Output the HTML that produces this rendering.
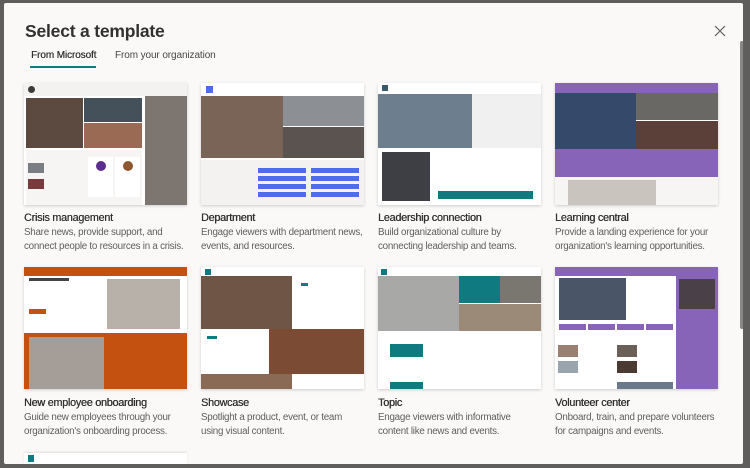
<!DOCTYPE html>
<html><head><meta charset="utf-8"><style>
*{margin:0;padding:0;box-sizing:border-box}
body{width:750px;height:468px;overflow:hidden;background:#5f5e5d;font-family:"Liberation Sans",sans-serif;position:relative}
.dlg{position:absolute;left:4px;top:3px;width:739px;height:461px;background:#faf9f8;border-radius:2px;overflow:hidden}
.h{position:absolute;left:21px;top:18px;font-size:17.5px;color:#323130;letter-spacing:-0.2px;font-weight:600}
.tab{position:absolute;top:47px;font-size:10px;color:#323130;letter-spacing:-0.1px}
.ul{position:absolute;left:26px;top:63px;width:66px;height:2px;background:#0f7b80}
.x{position:absolute;left:709px;top:21px;width:14px;height:14px}
.sb{position:absolute;left:736px;top:38px;width:4px;height:288px;background:#8a8886;border-radius:2px}
.t{position:absolute;width:163px;height:122px;background:#fff;box-shadow:0 1px 3px rgba(0,0,0,.18);overflow:hidden}
.t div{position:absolute}
.ti{position:absolute;font-size:10.8px;color:#323130;white-space:nowrap;letter-spacing:-0.25px;text-shadow:0.3px 0 0 #323130}
.de{position:absolute;font-size:9.8px;color:#605e5c;line-height:14px;white-space:nowrap;letter-spacing:-0.25px}
</style></head><body>
<div class="dlg">
<div class="h">Select a template</div>
<div class="tab" style="left:27px;text-shadow:0.3px 0 0 #323130">From Microsoft</div>
<div class="tab" style="left:111px;color:#484644">From your organization</div>
<div class="ul"></div>
<svg class="x" viewBox="0 0 14 14"><path d="M2 2L12 12M12 2L2 12" stroke="#605e5c" stroke-width="1.2"/></svg>
<div class="sb"></div>
</div>

<!-- Row 1 -->
<div class="t" style="left:24px;top:83px">
<div style="left:0;top:0;width:163px;height:13px;background:#f3f2f1"></div>
<div style="left:4px;top:3px;width:7px;height:7px;border-radius:50%;background:#3b3a39"></div>
<div style="left:2px;top:15px;width:57px;height:50px;background:#5c4a40"></div>
<div style="left:60px;top:15px;width:58px;height:24px;background:#44505a"></div>
<div style="left:60px;top:40px;width:58px;height:25px;background:#9a6a55"></div>
<div style="left:121px;top:13px;width:42px;height:109px;background:#7d7670"></div>
<div style="left:2px;top:67px;width:116px;height:55px;background:#f6f5f4"></div>
<div style="left:64px;top:74px;width:25px;height:40px;background:#fff"></div>
<div style="left:91px;top:74px;width:25px;height:40px;background:#fff"></div>
<div style="left:72px;top:78px;width:10px;height:10px;border-radius:50%;background:#5c2d91"></div>
<div style="left:99px;top:78px;width:10px;height:10px;border-radius:50%;background:#8e562e"></div>
<div style="left:4px;top:80px;width:16px;height:10px;background:#7a7d82"></div>
<div style="left:4px;top:96px;width:16px;height:10px;background:#7a3a3d"></div>
</div>
<div class="ti" style="left:24px;top:212px">Crisis management</div>
<div class="de" style="left:24px;top:226px">Share news, provide support, and<br>connect people to resources in a crisis.</div>

<div class="t" style="left:201px;top:83px">
<div style="left:5px;top:3px;width:7px;height:7px;background:#4f6bed"></div>
<div style="left:0;top:13px;width:82px;height:62px;background:#7a6458"></div>
<div style="left:82px;top:13px;width:81px;height:30px;background:#8c8f94"></div>
<div style="left:82px;top:44px;width:81px;height:31px;background:#5a5350"></div>
<div style="left:0;top:77px;width:163px;height:45px;background:#f3f2f1"></div>
<div style="left:57px;top:85px;width:48px;height:5px;background:#4f6bed"></div>
<div style="left:57px;top:93px;width:48px;height:5px;background:#4f6bed"></div>
<div style="left:57px;top:101px;width:48px;height:5px;background:#4f6bed"></div>
<div style="left:57px;top:109px;width:48px;height:5px;background:#4f6bed"></div>
<div style="left:110px;top:85px;width:48px;height:5px;background:#4f6bed"></div>
<div style="left:110px;top:93px;width:48px;height:5px;background:#4f6bed"></div>
<div style="left:110px;top:101px;width:48px;height:5px;background:#4f6bed"></div>
<div style="left:110px;top:109px;width:48px;height:5px;background:#4f6bed"></div>
</div>
<div class="ti" style="left:201px;top:212px">Department</div>
<div class="de" style="left:201px;top:226px">Engage viewers with department news,<br>events, and resources.</div>

<div class="t" style="left:378px;top:83px">
<div style="left:4px;top:2px;width:6px;height:6px;background:#3d5a6c"></div>
<div style="left:0;top:11px;width:94px;height:54px;background:#6d7f8e"></div>
<div style="left:94px;top:11px;width:69px;height:54px;background:#f0f0f0"></div>
<div style="left:4px;top:69px;width:48px;height:49px;background:#3e3f44"></div>
<div style="left:60px;top:108px;width:95px;height:8px;background:#0f7b80"></div>
</div>
<div class="ti" style="left:378px;top:212px">Leadership connection</div>
<div class="de" style="left:378px;top:226px">Build organizational culture by<br>connecting leadership and teams.</div>

<div class="t" style="left:555px;top:83px">
<div style="left:0;top:0;width:163px;height:10px;background:#8764b8"></div>
<div style="left:0;top:10px;width:81px;height:56px;background:#354a6a"></div>
<div style="left:81px;top:10px;width:82px;height:27px;background:#6a6864"></div>
<div style="left:81px;top:38px;width:82px;height:28px;background:#5a4038"></div>
<div style="left:0;top:66px;width:163px;height:28px;background:#8764b8"></div>
<div style="left:0;top:94px;width:163px;height:28px;background:#f6f5f4"></div>
<div style="left:13px;top:97px;width:88px;height:25px;background:#c9c4bd"></div>
</div>
<div class="ti" style="left:555px;top:212px">Learning central</div>
<div class="de" style="left:555px;top:226px">Provide a landing experience for your<br>organization's learning opportunities.</div>

<!-- Row 2 -->
<div class="t" style="left:24px;top:267px">
<div style="left:0;top:0;width:163px;height:9px;background:#c4510f"></div>
<div style="left:5px;top:11px;width:40px;height:3px;background:#444"></div>
<div style="left:5px;top:42px;width:17px;height:5px;background:#c4510f"></div>
<div style="left:83px;top:12px;width:73px;height:50px;background:#b8b1aa"></div>
<div style="left:0;top:66px;width:163px;height:56px;background:#c4510f"></div>
<div style="left:5px;top:70px;width:75px;height:52px;background:#a59e98"></div>
</div>
<div class="ti" style="left:24px;top:397px">New employee onboarding</div>
<div class="de" style="left:24px;top:411px">Guide new employees through your<br>organization's onboarding process.</div>

<div class="t" style="left:201px;top:267px">
<div style="left:4px;top:2px;width:6px;height:6px;background:#0f7b80"></div>
<div style="left:0;top:9px;width:91px;height:53px;background:#6e5546"></div>
<div style="left:68px;top:62px;width:95px;height:45px;background:#7b4b34"></div>
<div style="left:0;top:107px;width:91px;height:15px;background:#8a6a54"></div>
<div style="left:0;top:62px;width:68px;height:45px;background:#fff"></div>
<div style="left:6px;top:69px;width:10px;height:3px;background:#0f7b80"></div>
<div style="left:100px;top:16px;width:7px;height:3px;background:#0f7b80"></div>
</div>
<div class="ti" style="left:201px;top:397px">Showcase</div>
<div class="de" style="left:201px;top:411px">Spotlight a product, event, or team<br>using visual content.</div>

<div class="t" style="left:378px;top:267px">
<div style="left:3px;top:2px;width:6px;height:6px;background:#0f7b80"></div>
<div style="left:0;top:9px;width:81px;height:55px;background:#a8a8a6"></div>
<div style="left:81px;top:9px;width:41px;height:27px;background:#0f7b80"></div>
<div style="left:122px;top:9px;width:41px;height:27px;background:#7a7670"></div>
<div style="left:81px;top:37px;width:82px;height:27px;background:#9c8a78"></div>
<div style="left:12px;top:77px;width:33px;height:13px;background:#0f7b80"></div>
<div style="left:12px;top:115px;width:33px;height:7px;background:#0f7b80"></div>
</div>
<div class="ti" style="left:378px;top:397px">Topic</div>
<div class="de" style="left:378px;top:411px">Engage viewers with informative<br>content like news and events.</div>

<div class="t" style="left:555px;top:267px">
<div style="left:0;top:0;width:163px;height:9px;background:#8764b8"></div>
<div style="left:121px;top:9px;width:42px;height:113px;background:#8764b8"></div>
<div style="left:4px;top:11px;width:67px;height:42px;background:#4a5568"></div>
<div style="left:4px;top:57px;width:27px;height:6px;background:#8764b8"></div>
<div style="left:33px;top:57px;width:27px;height:6px;background:#8764b8"></div>
<div style="left:62px;top:57px;width:27px;height:6px;background:#8764b8"></div>
<div style="left:91px;top:57px;width:27px;height:6px;background:#8764b8"></div>
<div style="left:3px;top:78px;width:20px;height:12px;background:#9a8070"></div>
<div style="left:62px;top:78px;width:20px;height:12px;background:#6a6058"></div>
<div style="left:3px;top:94px;width:20px;height:12px;background:#9aa4ac"></div>
<div style="left:62px;top:94px;width:20px;height:12px;background:#4a3a32"></div>
<div style="left:62px;top:115px;width:56px;height:7px;background:#6a7a8a"></div>
<div style="left:124px;top:12px;width:36px;height:30px;background:#4a4048"></div>
</div>
<div class="ti" style="left:555px;top:397px">Volunteer center</div>
<div class="de" style="left:555px;top:411px">Onboard, train, and prepare volunteers<br>for campaigns and events.</div>

<!-- Row 3 -->
<div class="t" style="left:24px;top:453px;height:11px;box-shadow:0 -1px 2px rgba(0,0,0,.1)">
<div style="left:4px;top:2px;width:6px;height:7px;background:#0f7b80"></div>
</div>
<div style="position:absolute;left:0;top:464px;width:750px;height:4px;background:#5f5e5d"></div>
</body></html>
